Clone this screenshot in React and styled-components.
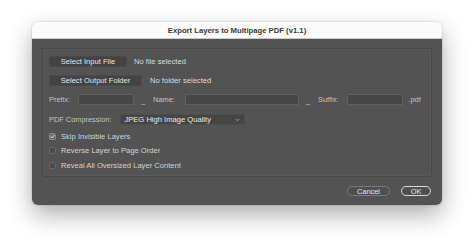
import React from 'react';
import styled, { createGlobalStyle } from 'styled-components';

const GlobalStyle = createGlobalStyle`
  html, body {
    margin: 0;
    padding: 0;
    background: #ffffff;
  }
  body {
    font-family: "Liberation Sans", Arial, sans-serif;
    -webkit-font-smoothing: antialiased;
  }
`;

const Page = styled.div`
  width: 474px;
  height: 248px;
  padding: 22px 0 0 32px;
  box-sizing: border-box;
`;

const Window = styled.div`
  width: 410px;
  height: 183px;
  border-radius: 6px;
  overflow: hidden;
  display: flex;
  flex-direction: column;
  box-shadow: 0 10px 24px rgba(0, 0, 0, 0.32), 0 0 2px rgba(0, 0, 0, 0.25);
`;

const TitleBar = styled.div`
  height: 16px;
  flex: none;
  background: #fbfbfb;
  border-bottom: 1px solid #c9c9c9;
  display: flex;
  align-items: center;
  justify-content: center;
  font-size: 7.7px;
  font-weight: bold;
  color: #3a3a3a;
`;

const Body = styled.div`
  flex: 1;
  background: #535353;
  padding: 9px 10px 0 10px;
  display: flex;
  flex-direction: column;
`;

const Panel = styled.div`
  height: 129px;
  box-sizing: border-box;
  border: 1px solid #484848;
  box-shadow: inset 0 0 0 1px #5a5a5a;
  border-radius: 2px;
  padding: 7px 6px 0 6px;
  display: flex;
  flex-direction: column;
`;

const Row = styled.div`
  display: flex;
  align-items: center;
  height: 11px;
  margin-top: ${p => p.$mt || 0}px;
`;

const PickButton = styled.div`
  height: 11px;
  width: ${p => p.$w}px;
  background: #434343;
  border: 1px solid #4a4a4a;
  box-sizing: border-box;
  display: flex;
  align-items: center;
  justify-content: center;
  font-size: 7.6px;
  color: #e4e4e4;
`;

const Status = styled.span`
  font-size: 7.6px;
  color: #dadada;
  margin-left: ${p => p.$ml}px;
`;

const Label = styled.span`
  font-size: 7.4px;
  color: #c4c4c4;
  margin-left: ${p => p.$ml || 0}px;
`;

const Field = styled.div`
  width: ${p => p.$w}px;
  height: 11px;
  box-sizing: border-box;
  background: #474747;
  border: 1px solid #5e5e5e;
  margin-left: ${p => p.$ml}px;
`;

const Sep = styled.span`
  font-size: 7.4px;
  color: #c8c8c8;
  margin-left: ${p => p.$ml}px;
  align-self: flex-end;
  line-height: 9px;
`;

const Select = styled.div`
  width: 125px;
  height: 11px;
  box-sizing: border-box;
  background: #454545;
  border: 1px solid #4d4d4d;
  margin-left: ${p => p.$ml}px;
  display: flex;
  align-items: center;
  justify-content: space-between;
  padding: 0 4px 0 3px;
  font-size: 7.6px;
  color: #e8e8e8;
`;

const CheckList = styled.div`
  margin-top: 4px;
`;

const CheckRow = styled.label`
  display: flex;
  align-items: center;
  height: 14.5px;
  font-size: 7.6px;
  color: #d2d2d2;
`;

const Box = styled.span`
  width: 7px;
  height: 7px;
  box-sizing: border-box;
  border: 1px solid ${p => (p.$on ? '#8a8a8a' : '#6a6a6a')};
  background: ${p => (p.$on ? '#6c6c6c' : '#4c4c4c')};
  border-radius: 1.5px;
  margin-right: 5px;
  display: flex;
  align-items: center;
  justify-content: center;
`;

const Footer = styled.div`
  display: flex;
  justify-content: flex-end;
  align-items: center;
  gap: 11px;
  padding: 9px 1px 0 0;
`;

const PillButton = styled.div`
  width: ${p => p.$w}px;
  height: 10px;
  box-sizing: border-box;
  border-radius: 6px;
  border: 1px solid ${p => (p.$primary ? '#d8d8d8' : '#7a7a7a')};
  background: #4f4f4f;
  display: flex;
  align-items: center;
  justify-content: center;
  font-size: 7.4px;
  color: #e6e6e6;
`;

const Check = () => (
  <svg width="5" height="5" viewBox="0 0 10 10">
    <path d="M1.5 5.2 L4 7.6 L8.6 2.2" fill="none" stroke="#f0f0f0" strokeWidth="1.8" />
  </svg>
);

const Chevron = () => (
  <svg width="5" height="4" viewBox="0 0 10 8">
    <path d="M1.5 2 L5 5.5 L8.5 2" fill="none" stroke="#bdbdbd" strokeWidth="1.4" />
  </svg>
);

const options = [
  { label: 'Skip Invisible Layers', on: true },
  { label: 'Reverse Layer to Page Order', on: false },
  { label: 'Reveal All Oversized Layer Content', on: false },
];

const App = () => {
  return (
    <Page>
      <GlobalStyle />
      <Window>
        <TitleBar>Export Layers to Multipage PDF (v1.1)</TitleBar>
        <Body>
          <Panel>
            <Row>
              <PickButton $w={78}>Select Input File</PickButton>
              <Status $ml={7}>No file selected</Status>
            </Row>
            <Row $mt={8}>
              <PickButton $w={93}>Select Output Folder</PickButton>
              <Status $ml={8}>No folder selected</Status>
            </Row>
            <Row $mt={8}>
              <Label>Prefix:</Label>
              <Field $w={56} $ml={8} />
              <Sep $ml={7}>_</Sep>
              <Label $ml={8}>Name:</Label>
              <Field $w={114} $ml={10} />
              <Sep $ml={7}>_</Sep>
              <Label $ml={8}>Suffix:</Label>
              <Field $w={56} $ml={9} />
              <Label $ml={5}>.pdf</Label>
            </Row>
            <Row $mt={9}>
              <Label>PDF Compression:</Label>
              <Select $ml={9}>
                <span>JPEG High Image Quality</span>
                <Chevron />
              </Select>
            </Row>
            <CheckList>
              {options.map(o => (
                <CheckRow key={o.label}>
                  <Box $on={o.on}>{o.on && <Check />}</Box>
                  {o.label}
                </CheckRow>
              ))}
            </CheckList>
          </Panel>
          <Footer>
            <PillButton $w={43}>Cancel</PillButton>
            <PillButton $w={30} $primary>OK</PillButton>
          </Footer>
        </Body>
      </Window>
    </Page>
  );
};

export default App;
